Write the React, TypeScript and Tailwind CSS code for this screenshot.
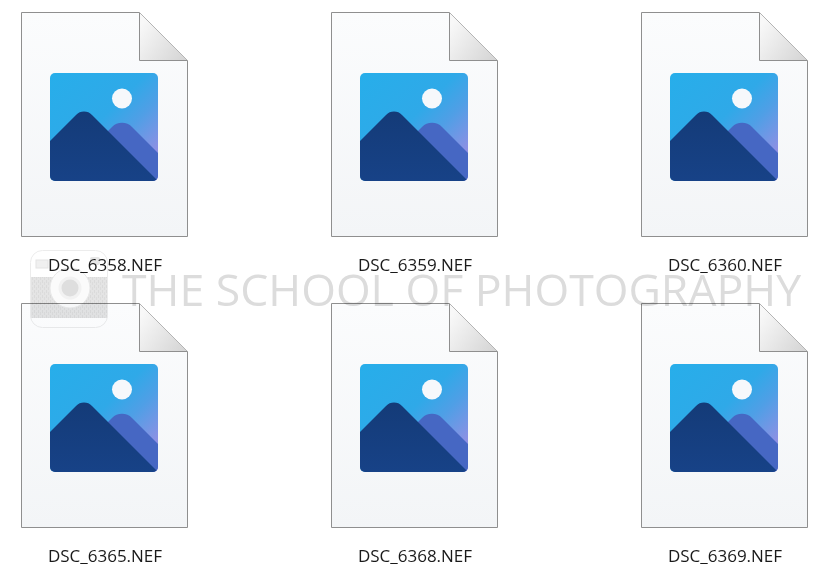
const files = ["DSC_6358.NEF", "DSC_6359.NEF", "DSC_6360.NEF", "DSC_6365.NEF", "DSC_6368.NEF", "DSC_6369.NEF"];

const FileIcon = () => (
  <svg width="168" height="225" viewBox="0 0 168 225" className="block">
    <defs>
      <linearGradient id="sky" x1="0" y1="0" x2="1" y2="1">
        <stop offset="0" stopColor="#27aeea" />
        <stop offset="0.45" stopColor="#2fa9e8" />
        <stop offset="0.62" stopColor="#4f9fe6" />
        <stop offset="0.85" stopColor="#8d90e4" />
        <stop offset="1" stopColor="#9a8ce4" />
      </linearGradient>
      <linearGradient id="fold" x1="0" y1="0.3" x2="1" y2="1">
        <stop offset="0" stopColor="#f8f8f8" />
        <stop offset="1" stopColor="#d3d3d3" />
      </linearGradient>
      <linearGradient id="page" x1="0" y1="0" x2="0" y2="1">
        <stop offset="0" stopColor="#fbfcfd" />
        <stop offset="1" stopColor="#f3f5f7" />
      </linearGradient>
      <linearGradient id="peak" x1="0" y1="0" x2="0" y2="1">
        <stop offset="0" stopColor="#143b78" />
        <stop offset="1" stopColor="#174287" />
      </linearGradient>
      <clipPath id="pic">
        <rect x="29" y="61" width="108" height="108" rx="5" />
      </clipPath>
    </defs>
    <path d="M0.5 0.5H118.5L166.5 48.5V224.5H0.5Z" fill="url(#page)" stroke="#8f8f8f" />
    <path d="M118.5 0.5L166.5 48.5H118.5Z" fill="url(#fold)" />
    <path d="M118.5 0.5V48.5H166.5" fill="none" stroke="#8f8f8f" />
    <path d="M118.5 0.5L166.5 48.5" fill="none" stroke="#b4b4b4" />
    <g clipPath="url(#pic)">
      <rect x="29" y="61" width="108" height="108" fill="url(#sky)" />
      <circle cx="101" cy="86.5" r="10" fill="#f6f8fb" />
      <path d="M137 141L111 115A14 14 0 0 0 91 115L70 136L120 169H137Z" fill="#4667c3" />
      <path d="M29 129L55 103A11 11 0 0 1 71 103L137 169H29Z" fill="url(#peak)" />
    </g>
  </svg>
);

const Watermark = () => (
  <div className="absolute left-[30px] top-[250px] flex items-center gap-[14px] pointer-events-none mix-blend-multiply">
    <svg width="78" height="78" viewBox="0 0 78 78" className="block shrink-0">
      <defs>
        <pattern id="grain" width="4" height="5" patternUnits="userSpaceOnUse">
          <rect width="4" height="5" fill="#e4e4e4" />
          <rect width="1" height="3" fill="#dadada" />
          <rect x="2" y="2" width="1" height="3" fill="#dcdcdc" />
        </pattern>
        <clipPath id="cam">
          <rect x="0.5" y="0.5" width="77" height="77" rx="12" />
        </clipPath>
      </defs>
      <g clipPath="url(#cam)">
        <rect x="0" y="27" width="78" height="41" fill="url(#grain)" />
      </g>
      <rect x="0.5" y="0.5" width="77" height="77" rx="12" fill="none" stroke="#ececec" />
      <rect x="6" y="10" width="12" height="8" fill="#f0f0f0" stroke="#e4e4e4" />
      <rect x="60" y="7" width="10" height="8" rx="2" fill="#e6e6e6" />
      <circle cx="40" cy="38" r="20" fill="#fbfbfb" stroke="#e8e8e8" />
      <circle cx="40" cy="38" r="10" fill="#dedede" stroke="#f2f2f2" strokeWidth="3" />
    </svg>
    <span className="whitespace-nowrap text-[44.6px] leading-none text-[#dcdcdc] font-['Open_Sans',sans-serif] font-normal">
      THE SCHOOL OF PHOTOGRAPHY
    </span>
  </div>
);

export default function App() {
  return (
    <div className="relative w-[831px] h-[578px] overflow-hidden bg-white font-['Open_Sans',sans-serif]">
      <div className="grid grid-cols-[310px_310px_211px] auto-rows-[291px] pt-[12px] pl-[21px]">
        {files.map((name) => (
          <div key={name} className="w-[168px] flex flex-col items-center">
            <FileIcon />
            <div className="mt-[17px] text-[17px] leading-[22px] text-[#1a1a1a] whitespace-nowrap">{name}</div>
          </div>
        ))}
      </div>
      <Watermark />
    </div>
  );
}
